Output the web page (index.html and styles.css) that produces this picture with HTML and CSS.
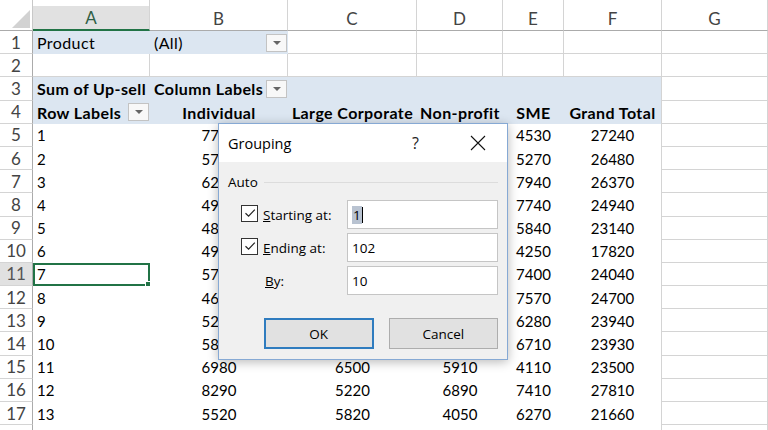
FILE: index.html
```html
<!DOCTYPE html>
<html>
<head>
<meta charset="utf-8">
<link rel="stylesheet" href="styles.css">
</head>
<body>
<div class="sheet">
  <div class="row head">
    <div class="corner"><svg class="tri" width="18" height="18" viewBox="0 0 18 18"><polygon points="18,0 18,18 0,18" fill="#d2d2d2"/></svg></div>
    <div class="ch sel">A</div><div class="ch">B</div><div class="ch">C</div><div class="ch">D</div><div class="ch">E</div><div class="ch">F</div><div class="ch">G</div>
  </div>
  <div class="row">
    <div class="rh">1</div>
    <div class="b">Product</div>
    <div class="b flex">(All)<span class="dd"><i></i></span></div>
    <div class="g"></div><div class="g"></div><div class="g"></div><div class="g"></div><div class="g"></div>
  </div>
  <div class="row">
    <div class="rh">2</div>
    <div class="g"></div><div class="g"></div><div class="g"></div><div class="g"></div><div class="g"></div><div class="g"></div><div class="g"></div>
  </div>
  <div class="row">
    <div class="rh">3</div>
    <div class="b bold">Sum of Up-sell</div>
    <div class="b bold flex">Column Labels<span class="dd"><i></i></span></div>
    <div class="b"></div><div class="b"></div><div class="b"></div><div class="b edge"></div>
    <div class="g"></div>
  </div>
  <div class="row">
    <div class="rh">4</div>
    <div class="b bold flex">Row Labels<span class="dd"><i></i></span></div>
    <div class="b bold ctr">Individual</div>
    <div class="b bold ctr">Large Corporate</div>
    <div class="b bold ctr">Non-profit</div>
    <div class="b bold ctr">SME</div>
    <div class="b bold ctr edge">Grand Total</div>
    <div class="g"></div>
  </div>
  <div class="row"><div class="rh">5</div><div class="w">1</div><div class="w ctr">7740</div><div class="w ctr"></div><div class="w ctr"></div><div class="w ctr">4530</div><div class="w ctr edge">27240</div><div class="g"></div></div>
  <div class="row"><div class="rh">6</div><div class="w">2</div><div class="w ctr">5790</div><div class="w ctr"></div><div class="w ctr"></div><div class="w ctr">5270</div><div class="w ctr edge">26480</div><div class="g"></div></div>
  <div class="row"><div class="rh">7</div><div class="w">3</div><div class="w ctr">6280</div><div class="w ctr"></div><div class="w ctr"></div><div class="w ctr">7940</div><div class="w ctr edge">26370</div><div class="g"></div></div>
  <div class="row"><div class="rh">8</div><div class="w">4</div><div class="w ctr">4970</div><div class="w ctr"></div><div class="w ctr"></div><div class="w ctr">7740</div><div class="w ctr edge">24940</div><div class="g"></div></div>
  <div class="row"><div class="rh">9</div><div class="w">5</div><div class="w ctr">4810</div><div class="w ctr"></div><div class="w ctr"></div><div class="w ctr">5840</div><div class="w ctr edge">23140</div><div class="g"></div></div>
  <div class="row"><div class="rh">10</div><div class="w">6</div><div class="w ctr">4920</div><div class="w ctr"></div><div class="w ctr"></div><div class="w ctr">4250</div><div class="w ctr edge">17820</div><div class="g"></div></div>
  <div class="row"><div class="rh rsel">11</div><div class="w active">7</div><div class="w ctr">5760</div><div class="w ctr"></div><div class="w ctr"></div><div class="w ctr">7400</div><div class="w ctr edge">24040</div><div class="g"></div></div>
  <div class="row"><div class="rh">12</div><div class="w">8</div><div class="w ctr">4680</div><div class="w ctr"></div><div class="w ctr"></div><div class="w ctr">7570</div><div class="w ctr edge">24700</div><div class="g"></div></div>
  <div class="row"><div class="rh">13</div><div class="w">9</div><div class="w ctr">5260</div><div class="w ctr"></div><div class="w ctr"></div><div class="w ctr">6280</div><div class="w ctr edge">23940</div><div class="g"></div></div>
  <div class="row"><div class="rh">14</div><div class="w">10</div><div class="w ctr">5840</div><div class="w ctr"></div><div class="w ctr"></div><div class="w ctr">6710</div><div class="w ctr edge">23930</div><div class="g"></div></div>
  <div class="row"><div class="rh">15</div><div class="w">11</div><div class="w ctr">6980</div><div class="w ctr">6500</div><div class="w ctr">5910</div><div class="w ctr">4110</div><div class="w ctr edge">23500</div><div class="g"></div></div>
  <div class="row"><div class="rh">16</div><div class="w">12</div><div class="w ctr">8290</div><div class="w ctr">5220</div><div class="w ctr">6890</div><div class="w ctr">7410</div><div class="w ctr edge">27810</div><div class="g"></div></div>
  <div class="row"><div class="rh">17</div><div class="w">13</div><div class="w ctr">5520</div><div class="w ctr">5820</div><div class="w ctr">4050</div><div class="w ctr">6270</div><div class="w ctr edge">21660</div><div class="g"></div></div>
  <div class="row"><div class="rh"></div><div class="w"></div><div class="w"></div><div class="w"></div><div class="w"></div><div class="w"></div><div class="w edge"></div><div class="g"></div></div>

  <div class="dialog">
    <div class="titlebar">
      <span class="title">Grouping</span>
      <span class="help">?</span>
      <svg class="close" width="16" height="16" viewBox="0 0 16 16"><path d="M1 1 L15 15 M15 1 L1 15" stroke="#111" stroke-width="1.1" fill="none"/></svg>
    </div>
    <div class="dbody">
      <div class="legend"><span>Auto</span><span class="rule"></span></div>
      <div class="field">
        <span class="cb"><svg width="14" height="14" viewBox="0 0 14 14"><path d="M2.5 7.2 L5.6 10.2 L11.8 3.6" stroke="#222" stroke-width="1.2" fill="none"/></svg></span>
        <span class="lab"><u>S</u>tarting at:</span>
        <span class="inp"><span class="hl">1</span><span class="caret"></span></span>
      </div>
      <div class="field">
        <span class="cb"><svg width="14" height="14" viewBox="0 0 14 14"><path d="M2.5 7.2 L5.6 10.2 L11.8 3.6" stroke="#222" stroke-width="1.2" fill="none"/></svg></span>
        <span class="lab"><u>E</u>nding at:</span>
        <span class="inp">102</span>
      </div>
      <div class="field">
        <span class="cbgap"></span>
        <span class="lab by"><u>B</u>y:</span>
        <span class="inp">10</span>
      </div>
      <div class="buttons">
        <span class="btn ok">OK</span>
        <span class="btn">Cancel</span>
      </div>
    </div>
  </div>
</div>
</body>
</html>
```

FILE: styles.css
```css
* { box-sizing: border-box; }
html, body { margin: 0; padding: 0; }
body {
  width: 768px;
  height: 430px;
  overflow: hidden;
  background: #fff;
  font-family: Lato, "Liberation Sans", sans-serif;
  font-size: 15px;
  color: #000;
}
.sheet {
  position: relative;
  width: 768px;
  height: 430px;
  overflow: hidden;
}
.row {
  display: grid;
  grid-template-columns: 33px 117px 138px 129px 86px 61px 98px 106px;
  height: 23.2px;
}
.row.head { height: 31px; }
.row > div {
  display: flex;
  align-items: center;
  white-space: nowrap;
  overflow: hidden;
  padding: 0 4px;
  position: relative;
}
.corner {
  background: #fff;
  border-right: 1px solid #c8c8c8;
  border-bottom: 1px solid #ababab;
  justify-content: flex-end;
  align-items: flex-end !important;
  padding: 0 2px 2px 0 !important;
}
.ch {
  justify-content: center;
  padding-top: 6px !important;
  color: #444;
  font-size: 17px;
  background: #fff;
  border-right: 1px solid #d4d4d4;
  border-bottom: 1px solid #ababab;
}
.ch.sel {
  background: linear-gradient(#fff 0 6px, #e1e1e1 6px);
  color: #2f5e45;
  border-bottom: 2px solid #217346;
}
.rh {
  justify-content: center;
  color: #444;
  font-size: 17px;
  padding: 0 !important;
  background: #fff;
  border-right: 1px solid #ababab;
  border-bottom: 1px solid #d4d4d4;
}
.rh.rsel {
  background: #e1e1e1;
  color: #555;
}
.g {
  border-right: 1px solid #d4d4d4;
  border-bottom: 1px solid #d4d4d4;
}
.b {
  background: #dce6f1;
  font-size: 16px;
  letter-spacing: 0.4px;
}
.bold { font-weight: bold; }
.ctr { justify-content: center; }
.edge { border-right: 1px solid #d4d4d4; }
.w { background: #fff; }
.flex { justify-content: space-between; padding-right: 1px !important; }
.dd {
  width: 21px;
  height: 18px;
  border: 1px solid #c3c3c3;
  background: #f8f8f8;
  display: flex;
  align-items: center;
  justify-content: center;
  flex: none;
}
.dd i {
  width: 0;
  height: 0;
  border-left: 4px solid transparent;
  border-right: 4px solid transparent;
  border-top: 4px solid #666;
}
.active {
  box-shadow: inset 0 0 0 2px #217346;
  overflow: visible !important;
}
.active::after {
  content: "";
  position: absolute;
  right: -3px;
  bottom: -3px;
  width: 6px;
  height: 6px;
  background: #217346;
  border: 1px solid #fff;
}

/* dialog */
.dialog {
  position: absolute;
  left: 218px;
  top: 123px;
  width: 290px;
  height: 237px;
  border: 1px solid #86a9d4;
  background: #f0f0f0;
  box-shadow: 0 2px 10px rgba(0, 0, 0, 0.28);
  font-family: "Open Sans", "Noto Sans", sans-serif;
  font-size: 13.5px;
  color: #000;
}
.titlebar {
  height: 38px;
  background: #fff;
  display: flex;
  align-items: center;
  padding-left: 9px;
}
.title { font-size: 14.5px; flex: 1; }
.help { font-size: 16px; margin-right: 51px; color: #222; }
.close { margin-right: 21px; }
.dbody {
  padding: 10px 9px 0 9px;
}
.legend {
  height: 20px;
  display: flex;
  align-items: center;
}
.rule {
  flex: 1;
  height: 1px;
  background: #dcdcdc;
  margin-left: 6px;
}
.field {
  display: flex;
  align-items: center;
  height: 29px;
  margin-top: 4px;
  padding-left: 13px;
}
.legend + .field { margin-top: 8px; }
.cb {
  width: 17px;
  height: 17px;
  border: 1px solid #333;
  background: #fff;
  display: flex;
  align-items: center;
  justify-content: center;
  margin-right: 5px;
  margin-top: -3px;
  flex: none;
}
.cbgap { width: 22px; flex: none; }
.lab { width: 84px; flex: none; }
.lab.by { padding-left: 2px; }
.inp {
  width: 151px;
  height: 29px;
  background: #fff;
  border: 1px solid #c5c5c5;
  display: flex;
  align-items: center;
  padding-left: 4px;
  font-size: 13.5px;
  flex: none;
}
.hl { background: #b9c3d1; padding: 0 1px; }
.caret { width: 1px; height: 16px; background: #000; }
.buttons {
  display: flex;
  gap: 15px;
  margin-top: 23px;
  padding-left: 36px;
}
.btn {
  width: 110px;
  height: 31px;
  background: #e1e1e1;
  border: 1px solid #adadad;
  display: flex;
  align-items: center;
  justify-content: center;
}
.btn.ok { border: 2px solid #2f7cbf; }
```
